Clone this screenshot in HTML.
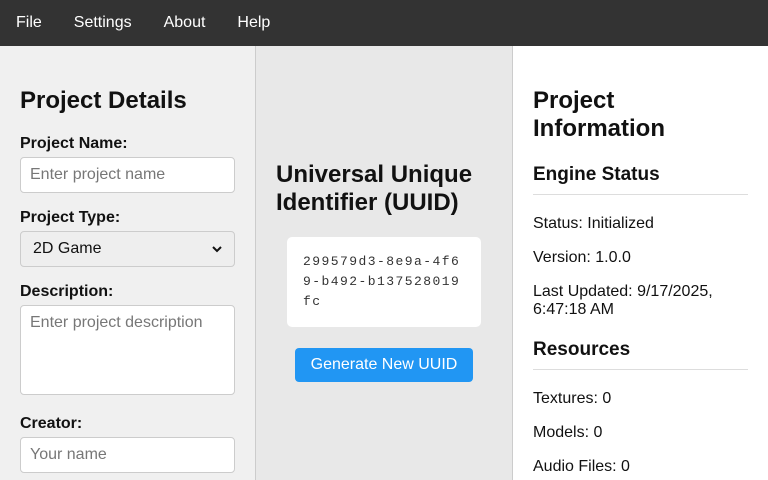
<!DOCTYPE html>
<html><head><style>
*{box-sizing:border-box;margin:0;padding:0}
body{width:768px;height:480px;overflow:hidden;font-family:"Liberation Sans",Arial,sans-serif;color:#111;background:#fff}
.nav{height:46px;background:#333;display:flex;align-items:center;padding-left:16px}
.nav span{color:#fff;font-size:16px;margin-right:32px}
.cols{display:flex;height:434px}
.c1{width:256px;background:#f0f0f0;border-right:1px solid #ccc;padding:20px}
.c2{width:257px;background:#e8e8e8;border-right:1px solid #ccc;padding:16px 20px 0;display:flex;flex-direction:column;justify-content:center;align-items:center}
.c3{flex:1;background:#fff;padding:20px}
h2{font-size:24px;font-weight:bold;line-height:28px}
.c1 h2{margin-top:21px;margin-bottom:20px}
label{display:block;font-weight:bold;font-size:16px;margin-bottom:4px}
.in{width:215px;height:36px;border:1px solid #ccc;border-radius:4px;background:#fff;color:#777;font-size:16px;padding:8px 9px;margin-bottom:16px}
.sel{background:#eee;color:#111;padding:8px 12px;display:flex;justify-content:space-between;align-items:center}
.ta{height:90px;margin-bottom:20px}
.c2 h2{align-self:flex-start;margin-bottom:20px}
.box{width:194px;background:#fff;border-radius:5px;padding:15px 16px;font-family:"Liberation Mono",monospace;font-size:13px;letter-spacing:1.45px;line-height:20px;color:#333;word-break:break-all;margin-bottom:21px}
.btn{background:#2196f3;color:#fff;font-size:16px;padding:8px 16px;border-radius:4px}
.c3 h2{margin-top:21px;margin-bottom:21px}
h3{font-size:19px;font-weight:bold;padding-bottom:8px;border-bottom:1px solid #ddd;margin-bottom:20px}
.h3b{margin-top:20px}
.c3 p{font-size:16px;line-height:18px;margin-bottom:16px}
</style></head><body>
<div class="nav"><span>File</span><span>Settings</span><span>About</span><span>Help</span></div>
<div class="cols">
<div class="c1">
<h2>Project Details</h2>
<label>Project Name:</label><div class="in">Enter project name</div>
<label>Project Type:</label><div class="in sel"><span>2D Game</span><svg width="10" height="7" viewBox="0 0 10 7"><path d="M1 1L5 5L9 1" stroke="#111" stroke-width="2" fill="none"/></svg></div>
<label>Description:</label><div class="in ta">Enter project description</div>
<label>Creator:</label><div class="in">Your name</div>
</div>
<div class="c2">
<h2>Universal Unique Identifier (UUID)</h2>
<div class="box">299579d3-8e9a-4f69-b492-b137528019fc</div>
<div class="btn">Generate New UUID</div>
</div>
<div class="c3">
<h2>Project Information</h2>
<h3>Engine Status</h3>
<p>Status: Initialized</p>
<p>Version: 1.0.0</p>
<p>Last Updated: 9/17/2025, 6:47:18 AM</p>
<h3 class="h3b">Resources</h3>
<p>Textures: 0</p>
<p>Models: 0</p>
<p>Audio Files: 0</p>
</div>
</div>
</body></html>
